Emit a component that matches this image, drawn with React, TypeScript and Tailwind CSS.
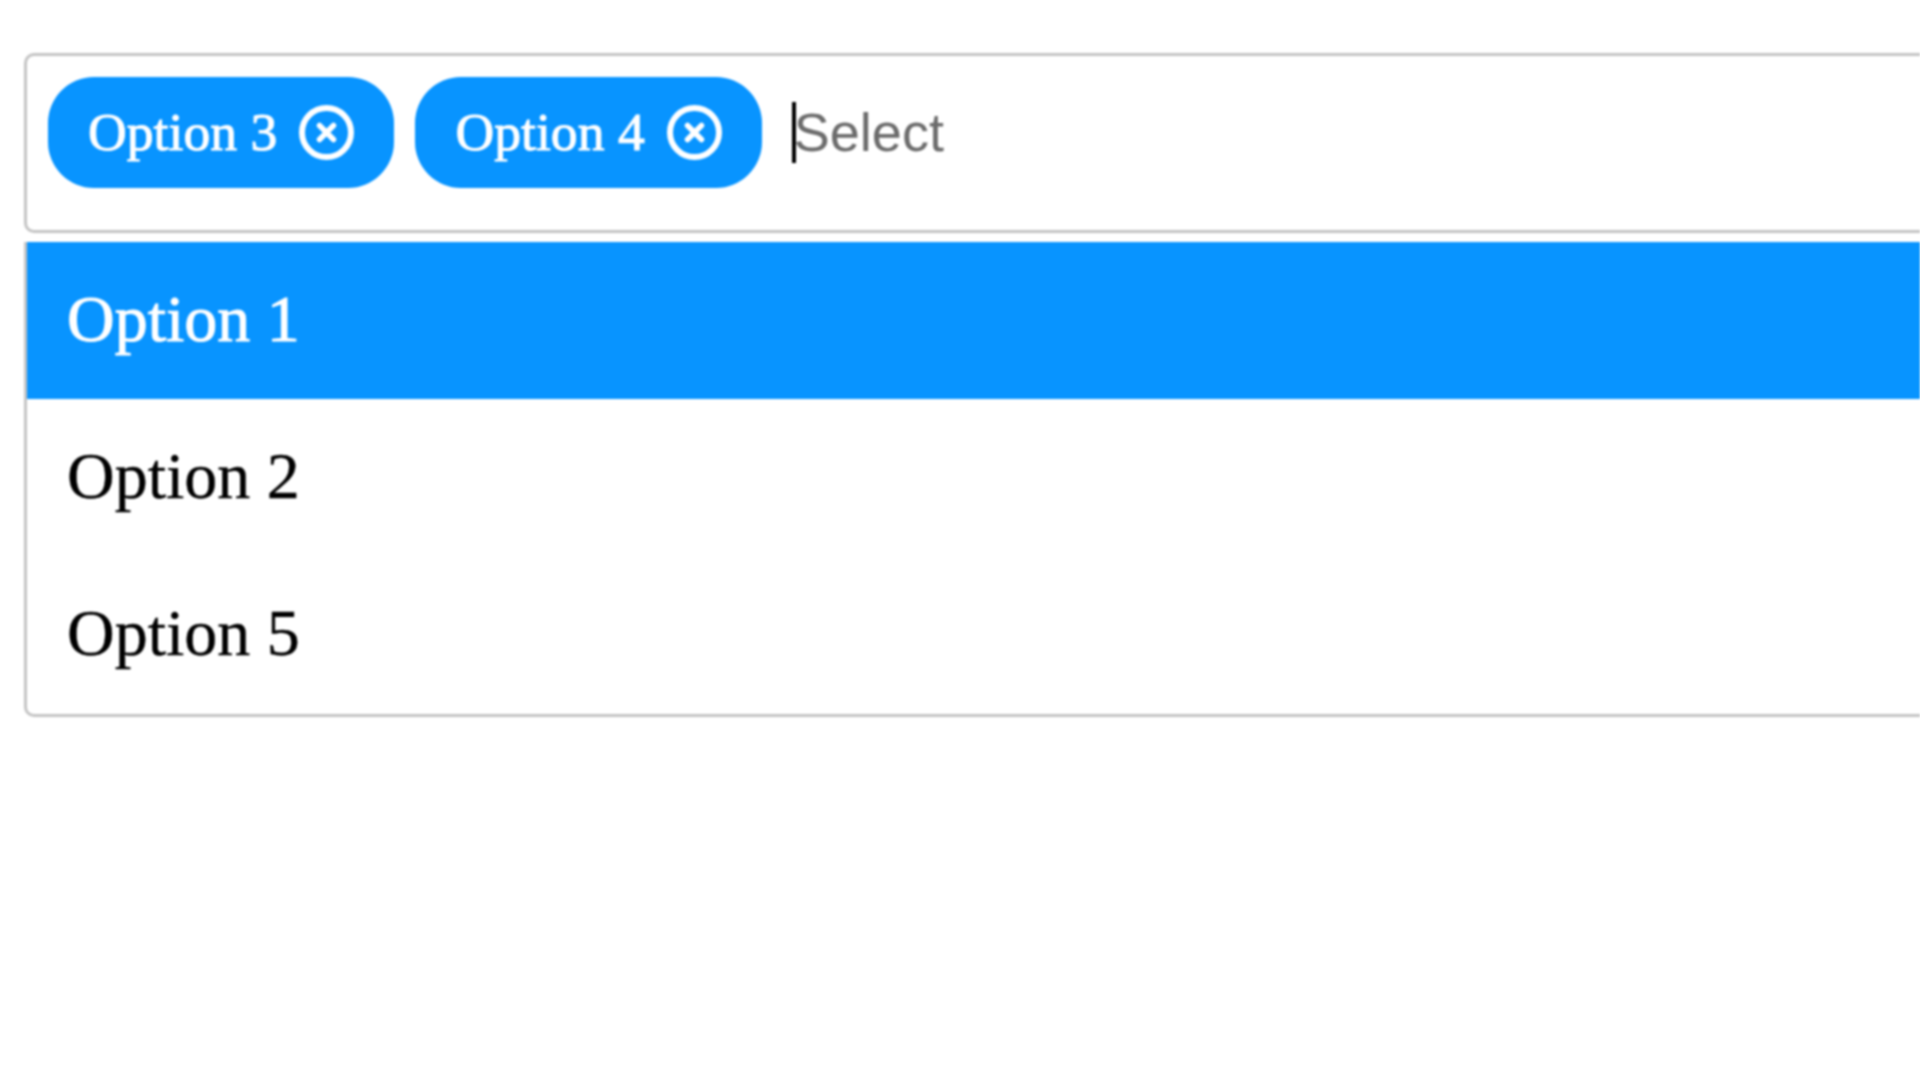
function CloseIcon() {
  return (
    <svg viewBox="0 0 55 55" className="w-[55px] h-[55px] shrink-0" fill="none" stroke="white" strokeWidth="6">
      <circle cx="27.5" cy="27.5" r="24.5" />
      <path d="M20.5 20.5 L34.5 34.5 M34.5 20.5 L20.5 34.5" strokeWidth="5.5" strokeLinecap="round" />
    </svg>
  );
}

function Chip({ label }: { label: string }) {
  return (
    <div className="flex items-center gap-[22px] h-[111px] pl-[40px] pr-[40px] rounded-[46px] bg-[#0894ff] text-white text-[53.7px] whitespace-nowrap [-webkit-text-stroke:1px_white]">
      <span>{label}</span>
      <CloseIcon />
    </div>
  );
}

const OPTIONS = ["Option 1", "Option 2", "Option 5"];

export default function App() {
  return (
    <div className="w-[1920px] h-[1080px] overflow-hidden bg-white pt-[53px] pl-[24px] font-['Liberation_Serif',serif] blur-[0.9px]">
      <div className="w-[2000px] h-[180px] border-[3px] border-[#c4c4c4] rounded-[10px] pt-[21px] pl-[21px] flex items-start gap-[21px]">
        <Chip label="Option 3" />
        <Chip label="Option 4" />
        <div className="flex items-center h-[111px] ml-[9px] font-['Liberation_Sans',sans-serif] text-[54px] text-[#6c6c6c]">
          <span className="w-[4px] h-[61px] bg-black mr-[-2px]" />
          <span>Select</span>
        </div>
      </div>
      <div className="w-[2000px] mt-[9px] pb-[1px] border-[3px] border-t-0 border-[#c4c4c4] rounded-b-[10px] text-[66px] text-black [-webkit-text-stroke:0.4px_black]">
        {OPTIONS.map((o, i) => (
          <div key={o} className={i === 0 ? "h-[157px] flex items-center pl-[40px] pb-[4px] bg-[#0894ff] text-white [-webkit-text-stroke:1px_white]" : "h-[157px] flex items-center pl-[40px] pb-[4px]"}>
            {o}
          </div>
        ))}
      </div>
    </div>
  );
}
